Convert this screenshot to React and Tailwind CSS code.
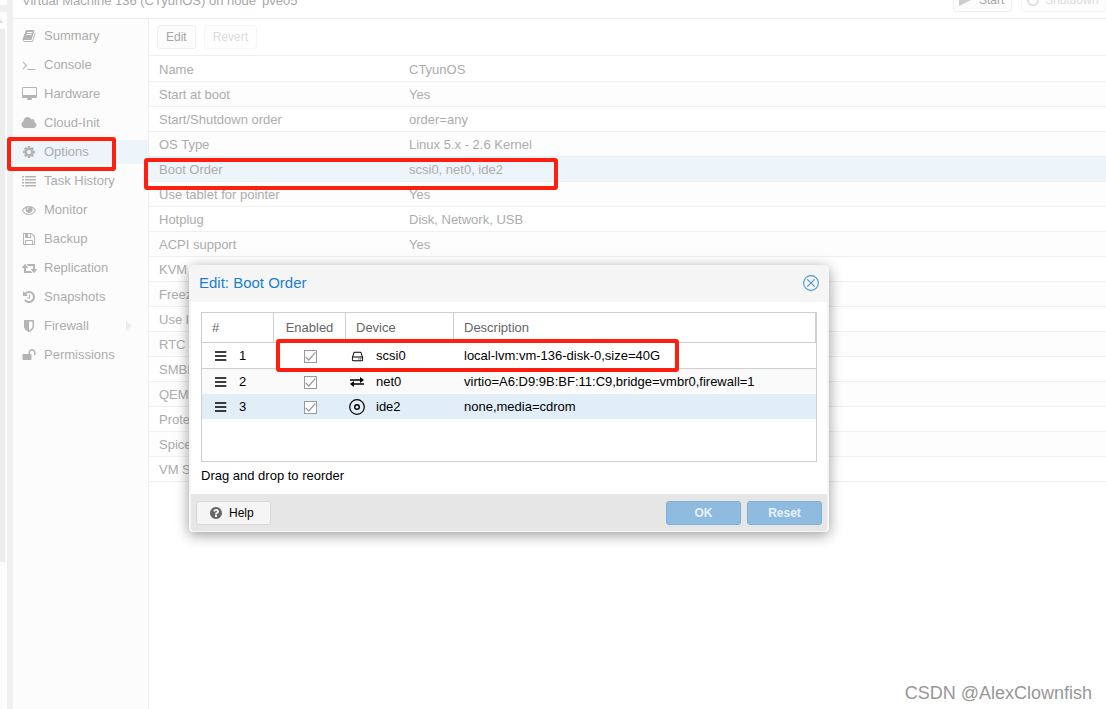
import React from "react";

const ICONS = {
  book: [1792, "M1703 478q40 57 18 129l-275 906q-19 64-76.5 107.5t-122.5 43.5h-923q-77 0-148.5-53.5t-99.5-131.5q-24-67-2-127 0-4 3-27t4-37q1-8-3-21.5t-3-19.5q2-11 8-21t16.5-23.5 16.5-23.5q23-38 45-91.5t30-91.5q3-10 .5-30t-.5-28q3-11 17-28t17-23q21-36 42-92t25-90q1-9-2.5-32t.5-28q4-13 22-30.5t22-22.5q19-26 42.5-84.5t27.5-96.5q1-8-3-25.5t-2-26.5q2-8 9-18t18-23 17-21q8-12 16.5-30.5t15-35 16-36 19.5-32 26.5-23.5 36-11.5 47.5 5.5l-1 3q38-9 51-9h761q74 0 114 56t18 130l-274 906q-36 119-71.5 153.5t-128.5 34.5h-869q-27 0-38 15-11 16-1 43 24 70 144 70h923q29 0 56-15.5t35-41.5l300-987q7-22 5-57 38 15 59 43zm-1064 2q-4 13 2 22.5t20 9.5h608q13 0 25.5-9.5t16.5-22.5l21-64q4-13-2-22.5t-20-9.5h-608q-13 0-25.5 9.5t-16.5 22.5zm-83 256q-4 13 2 22.5t20 9.5h608q13 0 25.5-9.5t16.5-22.5l21-64q4-13-2-22.5t-20-9.5h-608q-13 0-25.5 9.5t-16.5 22.5z"],
  terminal: [1792, "M649 983l-466 466q-10 10-23 10t-23-10l-50-50q-10-10-10-23t10-23l393-393-393-393q-10-10-10-23t10-23l50-50q10-10 23-10t23 10l466 466q10 10 10 23t-10 23zm1079 457v64q0 14-9 23t-23 9h-960q-14 0-23-9t-9-23v-64q0-14 9-23t23-9h960q14 0 23 9t9 23z"],
  desktop: [1920, "M1792 992v-832q0-13-9.5-22.5t-22.5-9.5h-1600q-13 0-22.5 9.5t-9.5 22.5v832q0 13 9.5 22.5t22.5 9.5h1600q13 0 22.5-9.5t9.5-22.5zm128-832v1088q0 66-47 113t-113 47h-544q0 37 16 77.5t32 71 16 43.5q0 26-19 45t-45 19h-512q-26 0-45-19t-19-45q0-14 16-44t32-70 16-78h-544q-66 0-113-47t-47-113v-1088q0-66 47-113t113-47h1600q66 0 113 47t47 113z"],
  cloud: [2048, "M1984 1152q0 159-112.5 271.5t-271.5 112.5h-1088q-185 0-316.5-131.5t-131.5-316.5q0-132 71-241.5t187-163.5q-2-28-2-43 0-212 150-362t362-150q158 0 286.5 88t187.5 230q70-62 166-62 106 0 181 75t75 181q0 75-41 138 129 30 213 134.5t84 239.5z"],
  cog: [1792, "M1152 896q0-106-75-181t-181-75-181 75-75 181 75 181 181 75 181-75 75-181zm512-109v222q0 12-8 23t-20 13l-185 28q-19 54-39 91 35 50 107 138 10 12 10 25t-9 23q-27 37-99 108t-94 71q-12 0-26-9l-138-108q-44 23-91 38-16 136-29 186-7 28-36 28h-222q-14 0-24.5-8.5t-11.5-21.5l-28-184q-49-16-90-37l-141 107q-10 9-25 9-14 0-25-11-126-114-165-168-7-10-7-23 0-12 8-23 15-21 51-66.5t54-70.5q-27-50-41-99l-183-27q-13-2-21-12.5t-8-23.5v-222q0-12 8-23t19-13l186-28q14-46 39-92-40-57-107-138-10-12-10-24 0-10 9-23 26-36 98.5-107.5t94.5-71.5q13 0 26 10l138 107q44-23 91-38 16-136 29-186 7-28 36-28h222q14 0 24.5 8.5t11.5 21.5l28 184q49 16 90 37l142-107q9-9 24-9 13 0 25 10 129 119 165 170 7 8 7 22 0 12-8 23-15 21-51 66.5t-54 70.5q26 50 41 98l183 28q13 2 21 12.5t8 23.5z"],
  list: [1792, "M0 256h256v192H0zM384 256h1408v192H384zM0 640h256v192H0zM384 640h1408v192H384zM0 1024h256v192H0zM384 1024h1408v192H384zM0 1408h256v192H0zM384 1408h1408v192H384z"],
  eye: [1792, "M1664 960q-152-236-381-353 61 104 61 225 0 185-131.5 316.5t-316.5 131.5-316.5-131.5-131.5-316.5q0-121 61-225-229 117-381 353 133 205 333.5 326.5t434.5 121.5 434.5-121.5 333.5-326.5zm-720-384q0-20-14-34t-34-14q-125 0-214.5 89.5t-89.5 214.5q0 20 14 34t34 14 34-14 14-34q0-86 61-147t147-61q20 0 34-14t14-34zm848 384q0 34-20 69-140 230-376.5 368.5t-499.5 138.5-499.5-139-376.5-368q-20-35-20-69t20-69q140-229 376.5-368t499.5-139 499.5 139 376.5 368q20 35 20 69z"],
  floppy: [1792, "M512 1536h768v-384h-768v384zm896 0h128v-896q0-14-10-38.5t-20-34.5l-281-281q-10-10-34-20t-39-10v416q0 40-28 68t-68 28h-576q-40 0-68-28t-28-68v-416h-128v1280h128v-416q0-40 28-68t68-28h832q40 0 68 28t28 68v416zm-384-928v-320q0-13-9.5-22.5t-22.5-9.5h-192q-13 0-22.5 9.5t-9.5 22.5v320q0 13 9.5 22.5t22.5 9.5h192q13 0 22.5-9.5t9.5-22.5zm640 32v928q0 40-28 68t-68 28h-1344q-40 0-68-28t-28-68v-1344q0-40 28-68t68-28h928q40 0 88 20t76 48l280 280q28 28 48 76t20 88z"],
  retweet: [1920, "M1280 1504q0 13-9.5 22.5t-22.5 9.5h-960q-8 0-13.5-2t-9-7-5.5-8-3-11.5-1-11.5v-600h-192q-26 0-45-19t-19-45q0-24 15-41l320-384q19-22 49-22t49 22l320 384q15 17 15 41 0 26-19 45t-45 19h-192v384h576q16 0 25 11l160 192q7 10 7 21zm640-416q0 24-15 41l-320 384q-20 23-49 23t-49-23l-320-384q-15-17-15-41 0-26 19-45t45-19h192v-384h-576q-16 0-25-12l-160-192q-7-9-7-20 0-13 9.5-22.5t22.5-9.5h960q8 0 13.5 2t9 7 5.5 8 3 11.5 1 11.5v600h192q26 0 45 19t19 45z"],
  history: [1792, "M1664 896q0 156-61 298t-164 245-245 164-298 61q-172 0-327-72.5t-264-204.5q-7-10-6.5-22.5t8.5-20.5l137-138q10-9 25-9 16 2 23 12 73 95 179 147t225 52q104 0 198.5-40.5t163.5-109.5 109.5-163.5 40.5-198.5-40.5-198.5-109.5-163.5-163.5-109.5-198.5-40.5q-98 0-188 35.5t-160 101.5l137 138q31 30 14 69-17 40-59 40h-448q-26 0-45-19t-19-45v-448q0-42 40-59 39-17 69 14l130 129q107-101 244.5-156.5t284.5-55.5q156 0 298 61t245 164 164 245 61 298zm-640-288v448q0 14-9 23t-23 9h-320q-14 0-23-9t-9-23v-64q0-14 9-23t23-9h224v-352q0-14 9-23t23-9h64q14 0 23 9t9 23z"],
  shield: [1792, "M1344 960v-640h-448v1137q119-63 213-137 235-184 235-360zm192-768v768q0 86-33.5 170.5t-83 150-118 127.5-126.5 103-121 77.5-89.5 49.5-42.5 20q-12 6-26 6t-26-6q-16-7-42.5-20t-89.5-49.5-121-77.5-126.5-103-118-127.5-83-150-33.5-170.5v-768q0-26 19-45t45-19h1152q26 0 45 19t19 45z"],
  unlock: [1792, "M1728 576v256q0 26-19 45t-45 19h-64q-26 0-45-19t-19-45v-256q0-106-75-181t-181-75-181 75-75 181v192h96q40 0 68 28t28 68v576q0 40-28 68t-68 28h-960q-40 0-68-28t-28-68v-576q0-40 28-68t68-28h672v-192q0-185 131.5-316.5t316.5-131.5 316.5 131.5 131.5 316.5z"],
  hdd: [1792, "M1168 1216q0 33-23.5 56.5t-56.5 23.5-56.5-23.5-23.5-56.5 23.5-56.5 56.5-23.5 56.5 23.5 23.5 56.5zm256 0q0 33-23.5 56.5t-56.5 23.5-56.5-23.5-23.5-56.5 23.5-56.5 56.5-23.5 56.5 23.5 23.5 56.5zm112 160v-320q0-13-9.5-22.5t-22.5-9.5h-1216q-13 0-22.5 9.5t-9.5 22.5v320q0 13 9.5 22.5t22.5 9.5h1216q13 0 22.5-9.5t9.5-22.5zm-1230-480h1180l-157-482q-4-13-16-21.5t-26-8.5h-782q-14 0-26 8.5t-16 21.5zm1358 160v320q0 66-47 113t-113 47h-1216q-66 0-113-47t-47-113v-320q0-25 16-75l197-606q17-53 63-86t101-33h782q55 0 101 33t63 86l197 606q16 50 16 75z"],
  question: [1792, "M1024 1376v-192q0-14-9-23t-23-9h-192q-14 0-23 9t-9 23v192q0 14 9 23t23 9h192q14 0 23-9t9-23zm256-672q0-88-55.5-163t-138.5-116-170-41q-243 0-371 213-15 24 8 42l132 100q7 6 19 6 16 0 25-12 53-68 86-92 34-24 86-24 48 0 85.5 26t37.5 59q0 38-20 61t-68 45q-63 28-115.5 86.5t-52.5 125.5v36q0 14 9 23t23 9h192q14 0 23-9t9-23q0-19 21.5-49.5t54.5-49.5q32-18 49-28.5t46-35 44.5-48 28-60.5 12.5-81zm384 192q0 209-103 385.5t-279.5 279.5-385.5 103-385.5-103-279.5-279.5-103-385.5 103-385.5 279.5-279.5 385.5-103 385.5 103 279.5 279.5 103 385.5z"],
};

function Icon({ name, className = "" }) {
  const [width, d] = ICONS[name];
  return (
    <svg aria-hidden="true" viewBox={`0 0 ${width} 1792`} className={`shrink-0 fill-current ${className}`}>
      <path d={d} />
    </svg>
  );
}

function Disc() {
  return (
    <svg aria-hidden="true" viewBox="0 0 16 16" className="size-4 fill-none stroke-current">
      <circle cx="8" cy="8" r="7.3" strokeWidth="1.2" />
      <circle cx="8" cy="8" r="2.3" strokeWidth="1.4" />
    </svg>
  );
}

function Exchange() {
  return (
    <svg aria-hidden="true" viewBox="0 0 14 10" className="h-[10px] w-[14px] fill-current">
      <path d="M0 2.2h10V0l4 3-4 3V3.8H0zM14 6.2H4V4L0 7l4 3V7.8h10z" />
    </svg>
  );
}

function Bars() {
  return (
    <svg aria-hidden="true" viewBox="0 0 12 10" className="h-[10px] w-3 shrink-0 fill-current">
      <path d="M0 0.3h11.3v1.5H0zM0 4.3h11.3v1.5H0zM0 8.3h11.3v1.5H0z" />
    </svg>
  );
}

const NAV = [
  ["Summary", "book"],
  ["Console", "terminal"],
  ["Hardware", "desktop"],
  ["Cloud-Init", "cloud"],
  ["Options", "cog"],
  ["Task History", "list"],
  ["Monitor", "eye"],
  ["Backup", "floppy"],
  ["Replication", "retweet"],
  ["Snapshots", "history"],
  ["Firewall", "shield"],
  ["Permissions", "unlock"],
];

const OPTIONS = [
  ["Name", "CTyunOS"],
  ["Start at boot", "Yes"],
  ["Start/Shutdown order", "order=any"],
  ["OS Type", "Linux 5.x - 2.6 Kernel"],
  ["Boot Order", "scsi0, net0, ide2"],
  ["Use tablet for pointer", "Yes"],
  ["Hotplug", "Disk, Network, USB"],
  ["ACPI support", "Yes"],
  ["KVM hardware virtualization", "Yes"],
  ["Freeze CPU at startup", ""],
  ["Use local time for RTC", ""],
  ["RTC start date", ""],
  ["SMBIOS Settings (type1)", ""],
  ["QEMU Guest Agent", ""],
  ["Protection", ""],
  ["Spice Enhancements", ""],
  ["VM State storage", ""],
];

const DEVICES = [
  { id: "scsi0", text: "local-lvm:vm-136-disk-0,size=40G", icon: <Icon name="hdd" className="size-[13px]" />, row: "bg-white", cell: "border-b border-[#cfcfcf]" },
  { id: "net0", text: "virtio=A6:D9:9B:BF:11:C9,bridge=vmbr0,firewall=1", icon: <Exchange />, row: "bg-[#fafafa]", cell: "" },
  { id: "ide2", text: "none,media=cdrom", icon: <Disc />, row: "bg-[#e1eef8]", cell: "" },
];

function Sidebar() {
  return (
    <nav className="relative w-[136px] shrink-0 border-r border-[#eeeeee] bg-[#fcfcfc] pt-[5px]">
      <ul className="flex flex-col gap-[5px]">
        {NAV.map(([label, icon]) => (
          <li key={label}>
            <a
              href="#"
              className={`flex h-6 items-center pl-2 text-[#acacac] ${label === "Options" ? "bg-[#edf4fa]" : ""}`}
            >
              <span className="mr-[7px] flex w-4 justify-center text-[#b4b4b4]">
                <Icon name={icon} className="h-[14px]" />
              </span>
              <span className="grow">{label}</span>
              {label === "Firewall" && (
                <svg aria-hidden="true" viewBox="0 0 6 10" className="mr-4 h-[10px] w-[6px] fill-[#ececec]">
                  <path d="M0 0l6 5-6 5z" />
                </svg>
              )}
            </a>
          </li>
        ))}
      </ul>
      <div className="pointer-events-none absolute top-[118px] -left-[6px] h-[34px] w-[109px] rounded-[3px] border-[4px] border-[#ff1f10]" />
    </nav>
  );
}

function OptionsPanel() {
  return (
    <main className="relative min-w-0 grow">
      <div className="flex h-[37px] items-center gap-2 border-b border-[#efefef] px-2">
        <button className="h-6 rounded-[3px] border border-[#f0f0f0] bg-[#fcfcfc] px-2 text-xs text-[#a6a6a6]">Edit</button>
        <button disabled className="h-6 rounded-[3px] border border-[#f6f6f6] bg-[#fefefe] px-2 text-xs text-[#dbdbdb]">Revert</button>
      </div>
      <table className="w-full table-fixed border-separate border-spacing-0 text-left">
        <colgroup>
          <col className="w-[250px]" />
          <col />
        </colgroup>
        <tbody>
          {OPTIONS.map(([label, value], i) => (
            <tr
              key={label}
              className={`h-[25px] text-[#acacac] first:h-[26px] ${label === "Boot Order" ? "bg-[#edf4fa]" : i % 2 ? "bg-[#fdfdfd]" : "bg-white"}`}
            >
              <td className="border-b border-[#efefef] pt-[2px] pb-0 pl-[10px] whitespace-nowrap">{label}</td>
              <td className="border-b border-[#efefef] pt-[2px] pb-0 pl-[10px] whitespace-nowrap">{value}</td>
            </tr>
          ))}
        </tbody>
      </table>
      <div className="pointer-events-none absolute top-[139px] -left-[5px] h-8 w-[414px] rounded-[3px] border-[4px] border-[#ff1f10]" />
    </main>
  );
}

function Check({ label }) {
  return (
    <span className="relative flex size-[13px]">
      <input
        type="checkbox"
        defaultChecked
        aria-label={label}
        className="peer size-[13px] appearance-none border border-[#999999] bg-white"
      />
      <svg
        aria-hidden="true"
        viewBox="0 0 13 13"
        className="pointer-events-none absolute inset-0 hidden size-[13px] fill-none stroke-[#999999] peer-checked:block"
      >
        <path d="M1.6 6.8l3.2 3.2 6.6-7.6" strokeWidth="1.2" />
      </svg>
    </span>
  );
}

function BootOrderDialog() {
  const th = "h-[30px] border-r border-b border-[#cfcfcf] py-0 pl-[10px] font-normal";
  return (
    <section
      role="dialog"
      aria-labelledby="dialog-title"
      className="absolute top-[265px] left-[189px] w-[640px] rounded-[4px] border-2 border-b border-[#f5f5f5] bg-white text-black shadow-[0_3px_14px_rgba(0,0,0,0.4)]"
    >
      <header className="flex h-[35px] items-center justify-between bg-[#f5f5f5] px-2 pb-1">
        <h2 id="dialog-title" className="text-[15px] leading-5 text-[#1a80c9]">Edit: Boot Order</h2>
        <button aria-label="Close" className="text-[#4c97cf]">
          <svg aria-hidden="true" viewBox="0 0 16 16" className="size-4 fill-none stroke-current">
            <circle cx="8" cy="8" r="7.4" strokeWidth="1.1" />
            <path d="M4.3 4.3l7.4 7.4M11.7 4.3l-7.4 7.4" strokeWidth="1.1" />
          </svg>
        </button>
      </header>
      <div className="relative px-[10px] pt-[10px] pb-2">
        <div className="h-[150px] border border-[#cfcfcf]">
          <table className="w-full table-fixed border-separate border-spacing-0 text-left">
            <colgroup>
              <col className="w-[72px]" />
              <col className="w-[72px]" />
              <col className="w-[108px]" />
              <col />
            </colgroup>
            <thead className="text-[#666666]">
              <tr>
                <th className={th}>#</th>
                <th className="h-[30px] border-r border-b border-[#cfcfcf] p-0 text-center font-normal">Enabled</th>
                <th className={th}>Device</th>
                <th className={th}>Description</th>
              </tr>
            </thead>
            <tbody>
              {DEVICES.map((d, i) => (
                <tr key={d.id} className={`h-[25px] first:h-[26px] ${d.row}`}>
                  <td className={`pt-px pb-0 pl-[13px] ${d.cell}`}>
                    <span className="flex items-center gap-3">
                      <Bars />
                      {i + 1}
                    </span>
                  </td>
                  <td className={`px-0 pt-px pb-0 ${d.cell}`}>
                    <span className="flex justify-center">
                      <Check label={`Enable ${d.id}`} />
                    </span>
                  </td>
                  <td className={`pt-px pb-0 pl-[3px] ${d.cell}`}>
                    <span className="flex items-center gap-[11px]">
                      <span className="flex w-4 justify-center">{d.icon}</span>
                      {d.id}
                    </span>
                  </td>
                  <td className={`pt-px pb-0 pl-[10px] whitespace-nowrap ${d.cell}`}>{d.text}</td>
                </tr>
              ))}
            </tbody>
          </table>
        </div>
        <p className="mt-1 leading-5">Drag and drop to reorder</p>
        <div className="pointer-events-none absolute top-[37px] left-[85px] h-[33px] w-[403px] rounded-[3px] border-[4px] border-[#ff1f10]" />
      </div>
      <footer className="flex h-[37px] items-center gap-[6px] rounded-b-[3px] bg-[#e6e6e6] px-[5px]">
        <button className="flex h-6 w-[75px] items-center gap-[6px] rounded-[3px] border border-[#d8d8d8] bg-[#f5f5f5] pl-3 text-xs">
          <Icon name="question" className="size-[14px] text-[#666666]" />
          Help
        </button>
        <button className="ml-auto h-6 w-[75px] rounded-[3px] border border-[#7ab0da] bg-[#8fbbde] text-xs font-bold text-[#e8f1f8]">OK</button>
        <button className="h-6 w-[75px] rounded-[3px] border border-[#7ab0da] bg-[#8fbbde] text-xs font-bold text-[#e8f1f8]">Reset</button>
      </footer>
    </section>
  );
}

export default function App() {
  return (
    <div className="relative flex min-h-screen overflow-hidden bg-white font-['Liberation_Sans',Arial,sans-serif] text-[13px] leading-4">
      <div className="flex w-[7px] shrink-0 flex-col bg-[#fcfcfc]">
        <div className="h-[5px] bg-white" />
        <div className="h-[7px] bg-[#f0f0f0]" />
        <div className="flex h-[17px] items-center">
          <svg aria-hidden="true" viewBox="0 0 3 4" className="h-1 w-[3px] fill-[#dcdcdc]">
            <path d="M0 0l3 4H0z" />
          </svg>
        </div>
        <div className="h-[533px] w-[5px] bg-[#ececec]" />
      </div>
      <div className="w-[6px] shrink-0 bg-[#f0f0f0]" />
      <div className="flex min-w-0 grow flex-col">
        <header className="flex h-[19px] items-end overflow-hidden border-b border-[#eeeeee] pb-[6px] pl-[9px] whitespace-nowrap">
          <h1 className="grow text-[13px] leading-[22px] text-[#a8a8a8]">Virtual Machine 136 (CTyunOS) on node 'pve05'</h1>
          <div className="flex shrink-0 gap-[9px]">
            <button className="flex h-6 w-[59px] items-center gap-2 rounded-[3px] border border-[#f0f0f0] bg-[#fcfcfc] px-[5px] text-xs text-[#a6a6a6]">
              <svg aria-hidden="true" viewBox="0 0 12 12" className="size-3 shrink-0 fill-[#cccccc]">
                <path d="M0 0l12 6-12 6z" />
              </svg>
              Start
            </button>
            <button disabled className="flex h-6 w-[85px] items-center gap-[6px] rounded-l-[3px] border border-[#f6f6f6] bg-[#fefefe] px-[5px] text-xs text-[#dbdbdb]">
              <svg aria-hidden="true" viewBox="0 0 12 12" className="size-3 shrink-0 fill-none stroke-current">
                <path d="M3.6 2A5 5 0 1 0 8.4 2M6 0v5.5" strokeWidth="1.6" />
              </svg>
              Shutdown
            </button>
          </div>
        </header>
        <div className="flex grow">
          <Sidebar />
          <OptionsPanel />
        </div>
      </div>
      <BootOrderDialog />
      <p className="absolute right-[14px] bottom-[5px] text-[18px] leading-[22px] text-[#979797] [text-shadow:1px_1px_0_#ffffff]">CSDN @AlexClownfish</p>
    </div>
  );
}
